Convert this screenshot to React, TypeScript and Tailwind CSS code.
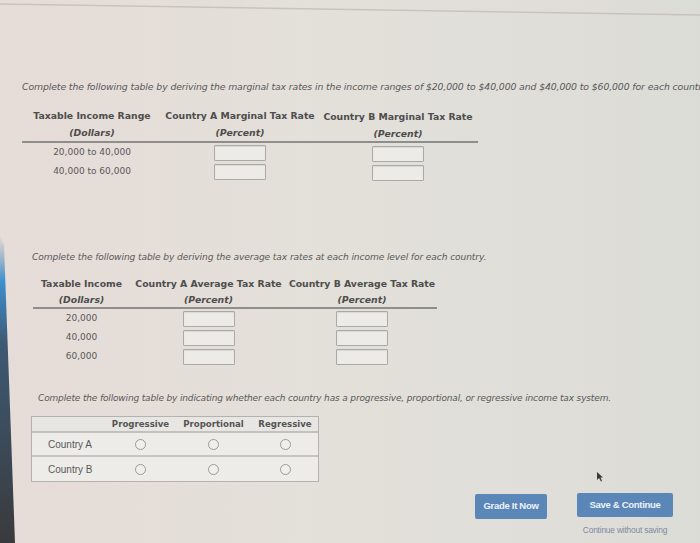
import React from 'react';

const font = "font-['DejaVu_Sans',Verdana,sans-serif]";

const Box = () => (
  <div className="w-[52px] h-[16px] border border-[#a9a9a6] bg-[#ecebe8] rounded-[1px] shadow-[inset_0_1px_1px_rgba(0,0,0,0.08)]" />
);

const Radio = () => (
  <div className="w-[11px] h-[11px] rounded-full border border-[#9a9a98] bg-[#f0efec]" />
);

const marginalRows = ['20,000 to 40,000', '40,000 to 60,000'];
const averageRows = ['20,000', '40,000', '60,000'];

const App: React.FC = () => {
  return (
    <div className={`relative w-[700px] h-[543px] overflow-hidden bg-gradient-to-r from-[#e6dcd8] via-[#e3e0da] to-[#dcdcd7] text-[#595959] ${font}`}>
      {/* screen edge line at top */}
      <svg className="absolute left-0 top-0 pointer-events-none" width="700" height="20">
        <line x1="0" y1="4" x2="700" y2="15" stroke="#c9c3bd" strokeWidth="1.5" />
      </svg>

      {/* bezel wedge on the left */}
      <svg className="absolute left-0 top-0 pointer-events-none" width="20" height="543">
        <defs>
          <linearGradient id="bezel" x1="0" y1="0" x2="0" y2="1">
            <stop offset="0" stopColor="#6f8fa8" stopOpacity="0" />
            <stop offset="0.15" stopColor="#3e8fd0" />
            <stop offset="0.35" stopColor="#3d5a74" />
            <stop offset="1" stopColor="#3a3a3c" />
          </linearGradient>
        </defs>
        <polygon points="0,235 4,245 15,543 0,543" fill="url(#bezel)" />
      </svg>

      {/* Section 1 */}
      <div className="pt-[81px] pl-[22px] whitespace-nowrap">
        <p className="text-[9.3px] leading-[12px] italic tracking-[-0.1px]">
          Complete the following table by deriving the marginal tax rates in the income ranges of $20,000 to $40,000 and $40,000 to $60,000 for each country.
        </p>

        <div className="mt-[13px] w-[456px]">
          <div className="grid grid-cols-[140px_156px_160px] text-[9.3px] font-bold text-[#4d4d4d]">
            <div className="h-[19px] flex items-center justify-center">Taxable Income Range</div>
            <div className="h-[19px] flex items-center justify-center">Country A Marginal Tax Rate</div>
            <div className="h-[19px] flex items-center justify-center pt-[3px]">Country B Marginal Tax Rate</div>
            <div className="h-[15px] flex items-center justify-center italic">(Dollars)</div>
            <div className="h-[15px] flex items-center justify-center italic">(Percent)</div>
            <div className="h-[15px] flex items-center justify-center italic pt-[3px]">(Percent)</div>
          </div>
          <div className="h-[2px] bg-[#8e8e8c] mt-[1px]" />
          <div className="grid grid-cols-[140px_156px_160px] text-[9px]">
            {marginalRows.map((r) => (
              <React.Fragment key={r}>
                <div className="h-[19px] flex items-center justify-center">{r}</div>
                <div className="h-[19px] flex items-center justify-center"><Box /></div>
                <div className="h-[19px] flex items-center justify-center pt-[2px]"><Box /></div>
              </React.Fragment>
            ))}
          </div>
        </div>
      </div>

      {/* Section 2 */}
      <div className="pt-[70px] pl-[32px] whitespace-nowrap">
        <p className="text-[9.1px] leading-[12px] italic tracking-[-0.1px]">
          Complete the following table by deriving the average tax rates at each income level for each country.
        </p>

        <div className="mt-[12px] ml-[1px] w-[404px]">
          <div className="grid grid-cols-[97px_157px_150px] text-[9.3px] font-bold text-[#4d4d4d]">
            <div className="h-[17px] flex items-center justify-center">Taxable Income</div>
            <div className="h-[17px] flex items-center justify-center">Country A Average Tax Rate</div>
            <div className="h-[17px] flex items-center justify-center">Country B Average Tax Rate</div>
            <div className="h-[15px] flex items-center justify-center italic">(Dollars)</div>
            <div className="h-[15px] flex items-center justify-center italic">(Percent)</div>
            <div className="h-[15px] flex items-center justify-center italic">(Percent)</div>
          </div>
          <div className="h-[2px] bg-[#8e8e8c]" />
          <div className="grid grid-cols-[97px_157px_150px] text-[9px]">
            {averageRows.map((r) => (
              <React.Fragment key={r}>
                <div className="h-[19px] flex items-center justify-center">{r}</div>
                <div className="h-[19px] flex items-center justify-center"><Box /></div>
                <div className="h-[19px] flex items-center justify-center"><Box /></div>
              </React.Fragment>
            ))}
          </div>
        </div>
      </div>

      {/* Section 3 */}
      <div className="pt-[26px] pl-[38px] whitespace-nowrap">
        <p className="text-[9px] leading-[12px] italic tracking-[-0.15px]">
          Complete the following table by indicating whether each country has a progressive, proportional, or regressive income tax system.
        </p>

        <div className="mt-[12px] -ml-[7px] w-[288px] border border-[#b3b2ae] bg-[#e7e6e2] text-[8.6px]">
          <div className="grid grid-cols-[74px_69px_77px_66px] h-[16px] items-center font-bold text-[#555] border-b-2 border-[#c2c1bd]">
            <div />
            <div className="text-center">Progressive</div>
            <div className="text-center">Proportional</div>
            <div className="text-center">Regressive</div>
          </div>
          {['Country A', 'Country B'].map((c, i) => (
            <div
              key={c}
              className={`grid grid-cols-[74px_69px_77px_66px] h-[24px] items-center bg-[#edece9] ${i === 0 ? 'border-b-2 border-[#c6c5c1]' : ''}`}
            >
              <div className="pl-[16px] font-['Liberation_Sans',Arial,sans-serif] text-[10px]">{c}</div>
              <div className="flex justify-center"><Radio /></div>
              <div className="flex justify-center"><Radio /></div>
              <div className="flex justify-center"><Radio /></div>
            </div>
          ))}
        </div>
      </div>

      {/* Buttons */}
      <div className="flex justify-end gap-[30px] pr-[27px] -mt-[2px] font-['Liberation_Sans',Arial,sans-serif]">
        <button className="mt-[14px] w-[72px] h-[25px] rounded-[2px] bg-[#5a86b8] text-[#eef2f7] text-[9.5px] font-bold tracking-[-0.3px]">
          Grade It Now
        </button>
        <div className="flex flex-col items-center mt-[13px]">
          <button className="w-[96px] h-[24px] rounded-[2px] bg-[#5a86b8] text-[#eef2f7] text-[9.5px] font-bold tracking-[-0.3px]">
            Save &amp; Continue
          </button>
          <span className="mt-[7px] text-[8.4px] text-[#7d8ba0] tracking-[-0.2px]">Continue without saving</span>
        </div>
      </div>

      {/* mouse cursor */}
      <svg className="absolute left-[596px] top-[472px] pointer-events-none" width="8" height="10" viewBox="0 0 8 10">
        <path d="M1 0 L1 8 L3 6 L5 9.5 L6 9 L4.5 5.5 L7 5.5 Z" fill="#3a3a3a" />
      </svg>
    </div>
  );
};

export default App;
